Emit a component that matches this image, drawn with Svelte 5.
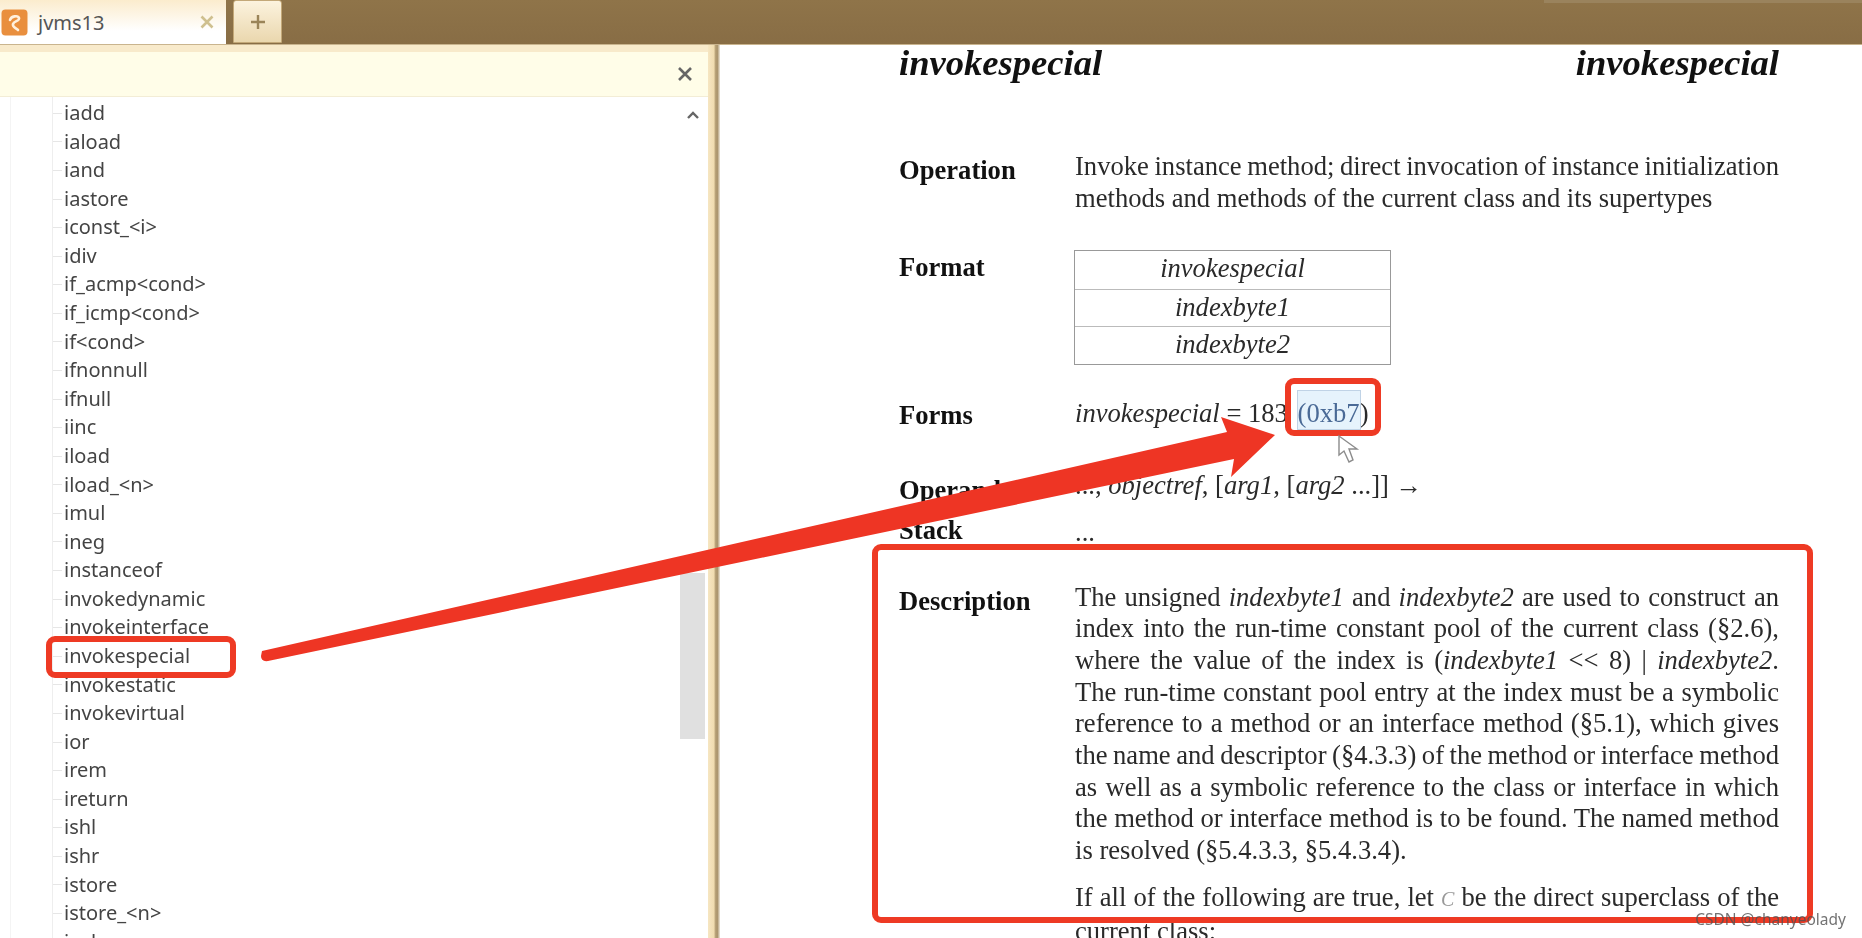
<script>
  const items = [
    'iadd', 'iaload', 'iand', 'iastore', 'iconst_<i>', 'idiv', 'if_acmp<cond>', 'if_icmp<cond>',
    'if<cond>', 'ifnonnull', 'ifnull', 'iinc', 'iload', 'iload_<n>', 'imul', 'ineg', 'instanceof',
    'invokedynamic', 'invokeinterface', 'invokespecial', 'invokestatic', 'invokevirtual', 'ior',
    'irem', 'ireturn', 'ishl', 'ishr', 'istore', 'istore_<n>', 'isub'
  ];
</script>

<div class="app">
  <header class="tabbar">
    <div class="tab">
      <svg class="logo" viewBox="0 0 27 27" width="27" height="27">
        <rect x="0.5" y="0.5" width="26" height="26" rx="4" fill="#e98f3e" />
        <path d="M9 11c1-4 8-5 9-2 1 3-5 3-6 6-1 3 3 4 5 6" fill="none" stroke="#fff0dd" stroke-width="2.6" stroke-linecap="round" />
      </svg>
      <span class="tab-title">jvms13</span>
      <svg class="tab-close" viewBox="0 0 14 14" width="14" height="14">
        <path d="M1.5 1.5l11 11M12.5 1.5l-11 11" stroke="#cfc08f" stroke-width="2.6" />
      </svg>
    </div>
    <button class="newtab" aria-label="New tab">
      <svg viewBox="0 0 16 16" width="16" height="16">
        <path d="M8 1v14M1 8h14" stroke="#9a8458" stroke-width="2.4" />
      </svg>
    </button>
    <div class="bar-strip"></div>
  </header>

  <div class="body">
    <aside class="sidebar">
      <div class="band"></div>
      <div class="panel-head">
        <svg viewBox="0 0 14 14" width="14" height="14">
          <path d="M1 1l12 12M13 1L1 13" stroke="#666" stroke-width="2.6" />
        </svg>
      </div>
      <div class="tree-wrap">
        <div class="tree">
          <ul class="list">
            {#each items as item}
              <li>{item}</li>
            {/each}
          </ul>
        </div>
        <div class="scroll">
          <svg class="chev" viewBox="0 0 14 10" width="14" height="10">
            <path d="M2 8l5-5 5 5" fill="none" stroke="#666" stroke-width="2.4" />
          </svg>
          <div class="thumb"></div>
        </div>
      </div>
    </aside>
    <div class="splitter"></div>

    <main class="doc">
      <div class="title">
        <span>invokespecial</span>
        <span>invokespecial</span>
      </div>

      <section class="row op">
        <div class="label">Operation</div>
        <div>
          <div class="ln">Invoke instance method; direct invocation of instance initialization</div>
          <div>methods and methods of the current class and its supertypes</div>
        </div>
      </section>

      <section class="row format">
        <div class="label">Format</div>
        <div class="fmt-table">
          <div>invokespecial</div>
          <div>indexbyte1</div>
          <div>indexbyte2</div>
        </div>
      </section>

      <section class="row forms">
        <div class="label">Forms</div>
        <div><i>invokespecial</i> = 183 <span class="sel">(0xb7</span>)</div>
      </section>

      <section class="row operand">
        <div class="label">Operand<br />Stack</div>
        <div>
          <div>..., <i>objectref</i>, [<i>arg1</i>, [<i>arg2</i> ...]] →</div>
          <div class="dots">...</div>
        </div>
      </section>

      <section class="row desc">
        <div class="label">Description</div>
        <div>
          <div class="ln">The unsigned <i>indexbyte1</i> and <i>indexbyte2</i> are used to construct an</div>
          <div class="ln">index into the run-time constant pool of the current class (§2.6),</div>
          <div class="ln">where the value of the index is (<i>indexbyte1</i> &lt;&lt; 8) | <i>indexbyte2</i>.</div>
          <div class="ln">The run-time constant pool entry at the index must be a symbolic</div>
          <div class="ln">reference to a method or an interface method (§5.1), which gives</div>
          <div class="ln">the name and descriptor (§4.3.3) of the method or interface method</div>
          <div class="ln">as well as a symbolic reference to the class or interface in which</div>
          <div class="ln">the method or interface method is to be found. The named method</div>
          <div>is resolved (§5.4.3.3, §5.4.3.4).</div>
          <div class="ln gap">If all of the following are true, let <i class="faint">C</i> be the direct superclass of the</div>
          <div>current class:</div>
        </div>
      </section>
    </main>
  </div>

  <!-- annotations drawn on top of the screenshot -->
  <div class="mark mark-item"></div>
  <div class="mark mark-hex"></div>
  <div class="mark mark-desc"></div>
  <svg class="overlay" width="1862" height="938" viewBox="0 0 1862 938">
    <path d="M262 651L1227 432L1221 417L1275 435L1231 477L1234 459L268 661Q261 662 261 656Z" fill="#ee3524" />
    <path d="M1339 436L1339 455L1344 451L1349 462L1353 460L1349 449L1357 449Z" fill="#fff" stroke="#8c8c8c" stroke-width="1.4" />
  </svg>
  <div class="watermark">CSDN @chanyeolady</div>
</div>

<style>
  :global(body) {
    margin: 0;
    background: #fff;
  }

  .app {
    position: relative;
    height: 938px;
    overflow: hidden;
    filter: blur(0.45px);
  }

  .tabbar {
    display: flex;
    height: 45px;
    background: linear-gradient(#8f7449, #886d45);
    box-sizing: border-box;
    border-bottom: 1px solid #c9b48e;
  }

  .tab {
    display: flex;
    align-items: center;
    width: 226px;
    padding: 0 12px 0 1px;
    box-sizing: border-box;
    background: linear-gradient(#fbeccd, #fff 70%);
  }

  .logo {
    flex: none;
    margin-top: 1px;
  }

  .tab-title {
    flex: 1;
    margin-left: 10px;
    font-family: "Noto Sans", sans-serif;
    font-size: 20px;
    color: #555;
  }

  .newtab {
    display: flex;
    align-items: center;
    justify-content: center;
    width: 49px;
    height: 43px;
    margin-left: 7px;
    padding: 0;
    border: 1px solid #c3a878;
    border-radius: 3px 3px 0 0;
    background: linear-gradient(#fcf3de, #ead7ae);
  }

  .bar-strip {
    height: 3px;
    margin-left: auto;
    width: 318px;
    background: #9a835d;
  }

  .body {
    display: flex;
    height: 893px;
  }

  .sidebar {
    width: 708px;
    flex: none;
    display: flex;
    flex-direction: column;
  }

  .band {
    height: 7px;
    background: #f8eacb;
  }

  .panel-head {
    height: 45px;
    display: flex;
    align-items: center;
    justify-content: flex-end;
    padding-right: 16px;
    background: #fffde8;
    border-bottom: 1px solid #f3edd6;
    box-sizing: border-box;
  }

  .tree-wrap {
    flex: 1;
    display: flex;
    min-height: 0;
    overflow: hidden;
  }

  .tree {
    flex: 1;
    margin-left: 10px;
    border-left: 1px solid #f4f4f4;
  }

  .list {
    list-style: none;
    margin: 0 0 0 41px;
    padding: 2px 0 0;
    border-left: 1px solid #eee;
    font-family: "Noto Sans", sans-serif;
    font-size: 20px;
    color: #444;
  }

  .list li {
    height: 28.58px;
    line-height: 28.58px;
    padding-left: 11px;
    background: linear-gradient(#e6e6e6, #e6e6e6) left center / 9px 1px no-repeat;
  }

  .scroll {
    width: 25px;
    margin-right: 3px;
    flex: none;
  }

  .chev {
    display: block;
    margin: 13px 0 0 6px;
  }

  .thumb {
    height: 166px;
    margin-top: 453px;
    background: #e0e0e0;
  }

  .splitter {
    width: 12px;
    flex: none;
    background: linear-gradient(90deg, #f6e6c2 0, #f0dcb0 50%, #bca67c 60%, #a8926a 78%, #efe9dc 100%);
  }

  .doc {
    flex: 1;
    min-width: 0;
    padding: 0 83px 0 179px;
    font-family: "Liberation Serif", serif;
    font-size: 26.6px;
    line-height: 32px;
    color: #2a2a2a;
  }

  .title {
    display: flex;
    justify-content: space-between;
    height: 36px;
    line-height: 36px;
    font-size: 36.6px;
    font-weight: bold;
    font-style: italic;
    color: #111;
  }

  .row {
    display: grid;
    grid-template-columns: 176px 1fr;
  }

  .label {
    font-weight: bold;
    color: #111;
    padding-top: 2px;
  }

  /* lines are squeezed a bit first so justify never makes them wrap */
  .ln {
    word-spacing: -3px;
    text-align: justify;
    text-align-last: justify;
  }

  .op {
    margin-top: 69px;
  }

  .op .label {
    padding-top: 4px;
  }

  .format {
    margin-top: 36px;
  }

  .format .label {
    padding-top: 1px;
  }

  .fmt-table {
    width: 317px;
    height: 115px;
    margin-left: -1px;
    box-sizing: border-box;
    border: 1px solid #999;
    display: grid;
    grid-template-rows: 1fr 1fr 1fr;
    font-style: italic;
    text-align: center;
  }

  .fmt-table div {
    padding-top: 1px;
  }

  .fmt-table div + div {
    border-top: 1px solid #bbb;
  }

  .forms {
    margin-top: 32px;
  }

  .sel {
    margin-left: 3px;
    padding: 7px 0 1px;
    background: #e6f3fc;
    outline: 1px solid #c0d3e6;
    color: #4a6a96;
  }

  .operand {
    margin-top: 38px;
  }

  .operand .label {
    line-height: 40px;
    padding-top: 1px;
  }

  .dots {
    margin-top: 15px;
  }

  .desc {
    margin-top: 31.5px;
    line-height: 31.7px;
  }

  .desc .label {
    padding-top: 4px;
  }

  .gap {
    margin-top: 15px;
  }

  .faint {
    color: #999;
    font-size: 20px;
  }

  .mark {
    position: absolute;
    box-sizing: border-box;
    border: 6px solid #ee3a24;
    border-radius: 9px;
  }

  .mark-item {
    left: 46px;
    top: 636px;
    width: 190px;
    height: 42px;
  }

  .mark-hex {
    left: 1285px;
    top: 378px;
    width: 96px;
    height: 58px;
  }

  .mark-desc {
    left: 872px;
    top: 544px;
    width: 941px;
    height: 379px;
  }

  .overlay {
    position: absolute;
    left: 0;
    top: 0;
  }

  .watermark {
    position: absolute;
    right: 16px;
    top: 908px;
    font-family: "Noto Sans", sans-serif;
    font-size: 15.5px;
    color: rgba(80, 80, 80, 0.8);
  }
</style>
